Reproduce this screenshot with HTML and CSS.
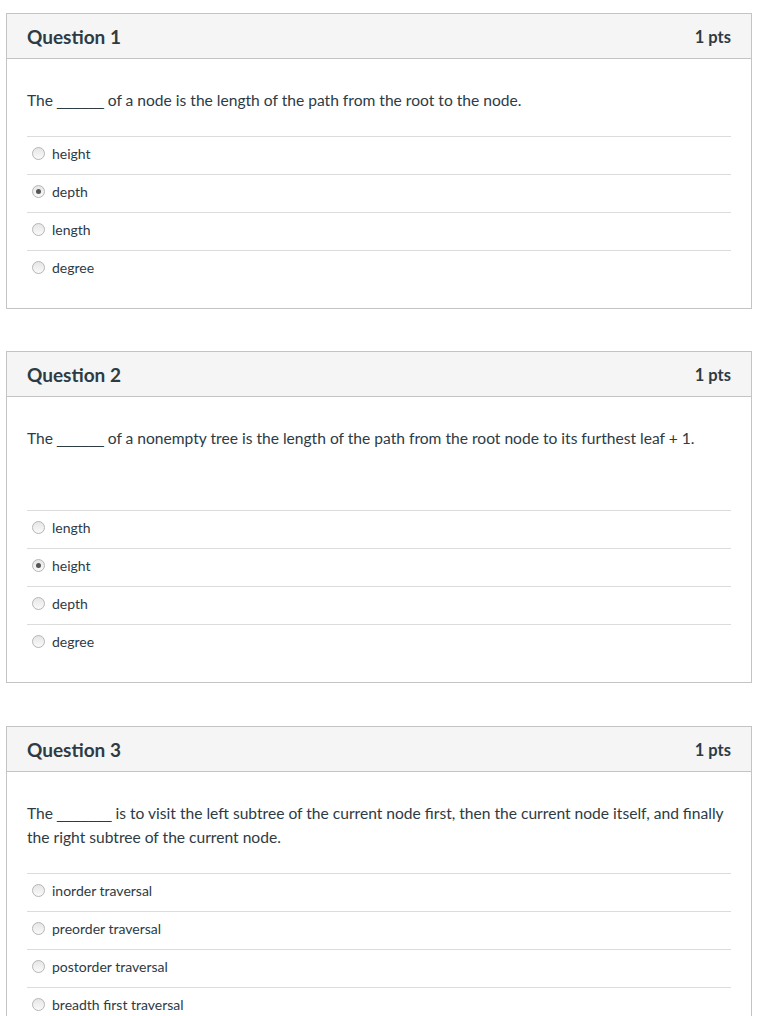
FILE: index.html
```html
<!DOCTYPE html>
<html lang="en">
<head>
    <meta charset="UTF-8">
    <title>Quiz</title>
    <link rel="stylesheet" href="styles.css">
</head>
<body>
    <div class="quiz">
        <div class="question">
            <div class="question-header">
                <h2>Question 1</h2>
                <span class="points">1 pts</span>
            </div>
            <div class="question-body">
                <p class="question-text">The <span class="blank">______</span> of a node is the length of the path from the root to the node.</p>
                <ul class="answers">
                    <li><span class="radio"></span>height</li>
                    <li><span class="radio checked"></span>depth</li>
                    <li><span class="radio"></span>length</li>
                    <li><span class="radio"></span>degree</li>
                </ul>
            </div>
        </div>

        <div class="question">
            <div class="question-header">
                <h2>Question 2</h2>
                <span class="points">1 pts</span>
            </div>
            <div class="question-body">
                <p class="question-text tall">The <span class="blank">______</span> of a nonempty tree is the length of the path from the root node to its furthest leaf + 1.</p>
                <ul class="answers">
                    <li><span class="radio"></span>length</li>
                    <li><span class="radio checked"></span>height</li>
                    <li><span class="radio"></span>depth</li>
                    <li><span class="radio"></span>degree</li>
                </ul>
            </div>
        </div>

        <div class="question last">
            <div class="question-header">
                <h2>Question 3</h2>
                <span class="points">1 pts</span>
            </div>
            <div class="question-body">
                <p class="question-text">The <span class="blank">_______</span> is to visit the left subtree of the current node first, then the current node itself, and finally the right subtree of the current node.</p>
                <ul class="answers">
                    <li><span class="radio"></span>inorder traversal</li>
                    <li><span class="radio"></span>preorder traversal</li>
                    <li><span class="radio"></span>postorder traversal</li>
                    <li><span class="radio"></span>breadth first traversal</li>
                </ul>
            </div>
        </div>
    </div>
</body>
</html>
```

FILE: styles.css
```css
body {
    font-family: Lato, "Open Sans", Arial, sans-serif;
    color: #2d3b45;
    background-color: #ffffff;
    margin: 0;
    padding: 0;
}
.quiz {
    padding: 13px 10px 40px 6px;
    display: flex;
    flex-direction: column;
    gap: 42px;
}
.question {
    width: 746px;
    border: 1px solid #c4c4c4;
    box-sizing: border-box;
}
.question.last {
    margin-top: 1px;
}
.question-header {
    display: flex;
    justify-content: space-between;
    align-items: center;
    height: 44px;
    padding: 0 20px;
    background-color: #f5f5f5;
    border-bottom: 1px solid #c4c4c4;
}
.question-header h2 {
    margin: 0;
    font-size: 19px;
    font-weight: bold;
}
.points {
    font-size: 16.5px;
    font-weight: bold;
    padding-top: 2px;
}
.question-body {
    padding: 29px 20px 20px 20px;
}
.question-text {
    margin: 0 0 24px 0;
    font-size: 15.6px;
    line-height: 24px;
}
.question-text.tall {
    margin-bottom: 60px;
}
.blank {
    font-family: "Liberation Sans", Arial, sans-serif;
    font-size: 14px;
    line-height: 1;
}
.answers {
    list-style-type: none;
    margin: 0;
    padding: 0;
}
.answers li {
    display: flex;
    align-items: center;
    height: 38px;
    padding-bottom: 4px;
    padding-left: 5px;
    box-sizing: border-box;
    border-top: 1px solid #dcdcdc;
    font-size: 14px;
}
.radio {
    width: 11px;
    height: 11px;
    border: 1px solid #b5b5b5;
    border-radius: 50%;
    background: linear-gradient(#e6e6e6, #fafafa);
    margin-right: 7px;
    position: relative;
}
.radio.checked::after {
    content: "";
    position: absolute;
    left: 3px;
    top: 3px;
    width: 5px;
    height: 5px;
    border-radius: 50%;
    background-color: #555;
}
```
